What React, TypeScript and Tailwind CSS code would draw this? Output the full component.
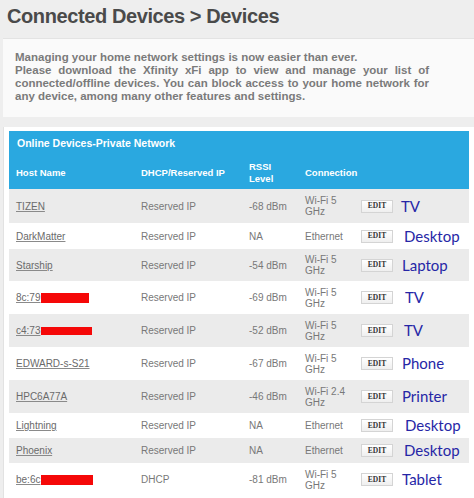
import React from 'react'

type Row = {
  host: string
  redact?: string
  ip: string
  rssi: string
  conn: string
  label: string
  h: string
  bg: string
  ml: string
}

const ROWS: Row[] = [
  { host: 'TIZEN', ip: 'Reserved IP', rssi: '-68 dBm', conn: 'Wi-Fi 5 GHz', label: 'TV', h: 'h-[34px]', bg: 'bg-[#ebebeb]', ml: 'ml-[8px]' },
  { host: 'DarkMatter', ip: 'Reserved IP', rssi: 'NA', conn: 'Ethernet', label: 'Desktop', h: 'h-[26px]', bg: 'bg-white', ml: 'ml-[11px]' },
  { host: 'Starship', ip: 'Reserved IP', rssi: '-54 dBm', conn: 'Wi-Fi 5 GHz', label: 'Laptop', h: 'h-[32px]', bg: 'bg-[#ebebeb]', ml: 'ml-[9px]' },
  { host: '8c:79', redact: 'w-[48px] h-[10px]', ip: 'Reserved IP', rssi: '-69 dBm', conn: 'Wi-Fi 5 GHz', label: 'TV', h: 'h-[33px]', bg: 'bg-white', ml: 'ml-[12px]' },
  { host: 'c4:73', redact: 'w-[51px] h-[8px]', ip: 'Reserved IP', rssi: '-52 dBm', conn: 'Wi-Fi 5 GHz', label: 'TV', h: 'h-[33px]', bg: 'bg-[#ebebeb]', ml: 'ml-[11px]' },
  { host: 'EDWARD-s-S21', ip: 'Reserved IP', rssi: '-67 dBm', conn: 'Wi-Fi 5 GHz', label: 'Phone', h: 'h-[33px]', bg: 'bg-white', ml: 'ml-[9px]' },
  { host: 'HPC6A77A', ip: 'Reserved IP', rssi: '-46 dBm', conn: 'Wi-Fi 2.4 GHz', label: 'Printer', h: 'h-[33px]', bg: 'bg-[#ebebeb]', ml: 'ml-[9px]' },
  { host: 'Lightning', ip: 'Reserved IP', rssi: 'NA', conn: 'Ethernet', label: 'Desktop', h: 'h-[25px]', bg: 'bg-white', ml: 'ml-[12px]' },
  { host: 'Phoenix', ip: 'Reserved IP', rssi: 'NA', conn: 'Ethernet', label: 'Desktop', h: 'h-[25px]', bg: 'bg-[#ebebeb]', ml: 'ml-[11px]' },
  { host: 'be:6c', redact: 'w-[52px] h-[10px]', ip: 'DHCP', rssi: '-81 dBm', conn: 'Wi-Fi 5 GHz', label: 'Tablet', h: 'h-[33px]', bg: 'bg-white', ml: 'ml-[9px]' },
]

function EditButton() {
  return (
    <button
      type="button"
      className="flex h-[13px] w-[32px] items-center justify-center border border-[#d4d4d4] bg-gradient-to-b from-white to-[#efefef] font-['Liberation_Serif',serif] text-[7.5px] leading-none font-bold text-[#333]"
    >
      EDIT
    </button>
  )
}

export default function App() {
  return (
    <div className="h-[498px] w-[474px] overflow-hidden bg-[#eeeeee] font-['Liberation_Sans',Arial,sans-serif]">
      <h1 className="h-[38px] pt-[4px] pl-[7px] text-[20px] leading-[24px] font-bold tracking-[-0.4px] text-[#4a4a4a]">
        Connected Devices &gt; Devices
      </h1>

      <div className="ml-[3px] h-[79px] border-t border-[#e3e3e3] bg-[#fafafa] pt-[12px] pl-[12px]">
        <p className="w-[414px] text-justify text-[11.5px] leading-[13px] font-bold text-[#7a7a7a]">
          Managing your home network settings is now easier than ever.
          <br />
          Please download the Xfinity xFi app to view and manage your list of
          connected/offline devices. You can block access to your home network
          for any device, among many other features and settings.
        </p>
      </div>

      <div className="mt-[10px] ml-[3px] h-[400px] border-l border-[#e2e2e2] bg-white pt-[4px] pl-[5px]">
        <table className="w-[460px] table-fixed border-collapse">
          <colgroup>
            <col className="w-[125px]" />
            <col className="w-[108px]" />
            <col className="w-[56px]" />
            <col className="w-[56px]" />
            <col className="w-[115px]" />
          </colgroup>
          <thead className="bg-[#2aa8e0] text-left text-white">
            <tr className="h-[26px]">
              <th colSpan={5} className="pl-[8px] text-[10.5px] font-bold">
                Online Devices-Private Network
              </th>
            </tr>
            <tr className="h-[32px] text-[9.5px] leading-[12px] font-bold">
              <th className="pl-[7px] whitespace-nowrap">Host Name</th>
              <th className="pl-[7px] whitespace-nowrap">DHCP/Reserved IP</th>
              <th className="pl-[7px]">
                RSSI
                <br />
                Level
              </th>
              <th className="pl-[7px] whitespace-nowrap">Connection</th>
              <th />
            </tr>
          </thead>
          <tbody className="text-[10px] leading-[11px] text-[#787878]">
            {ROWS.map((r) => (
              <tr key={r.host} className={`${r.h} ${r.bg}`}>
                <td className="pl-[7px] whitespace-nowrap">
                  <span className="text-[#6a6a6a] underline decoration-[#8a8a8a]">{r.host}</span>
                  {r.redact && (
                    <span className={`ml-px inline-block align-middle bg-[#f50808] ${r.redact}`} />
                  )}
                </td>
                <td className="pl-[7px]">{r.ip}</td>
                <td className="pl-[7px]">{r.rssi}</td>
                <td className="pr-[4px] pl-[7px]">{r.conn}</td>
                <td className="pl-[7px]">
                  <div className="flex items-center">
                    <EditButton />
                    <span className={`font-['Lato',sans-serif] text-[15px] leading-none text-[#2626a6] ${r.ml}`}>
                      {r.label}
                    </span>
                  </div>
                </td>
              </tr>
            ))}
          </tbody>
        </table>
      </div>
    </div>
  )
}
